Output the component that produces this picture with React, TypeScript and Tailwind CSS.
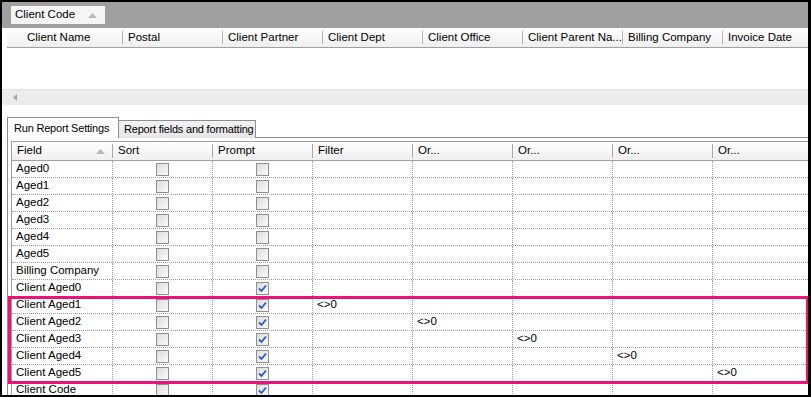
import React from "react";

const topCols = [
  { label: "Client Name", w: 116, pad: 20 },
  { label: "Postal", w: 100 },
  { label: "Client Partner", w: 100 },
  { label: "Client Dept", w: 100 },
  { label: "Client Office", w: 100 },
  { label: "Client Parent Na...", w: 100 },
  { label: "Billing Company", w: 100 },
  { label: "Invoice Date", w: 100 },
];

const gridCols = ["Field", "Sort", "Prompt", "Filter", "Or...", "Or...", "Or...", "Or..."];

interface Row {
  field: string;
  prompt: boolean;
  filterCol?: number; // which column holds "<>0"
}

const rows: Row[] = [
  { field: "Aged0", prompt: false },
  { field: "Aged1", prompt: false },
  { field: "Aged2", prompt: false },
  { field: "Aged3", prompt: false },
  { field: "Aged4", prompt: false },
  { field: "Aged5", prompt: false },
  { field: "Billing Company", prompt: false },
  { field: "Client Aged0", prompt: true },
  { field: "Client Aged1", prompt: true, filterCol: 3 },
  { field: "Client Aged2", prompt: true, filterCol: 4 },
  { field: "Client Aged3", prompt: true, filterCol: 5 },
  { field: "Client Aged4", prompt: true, filterCol: 6 },
  { field: "Client Aged5", prompt: true, filterCol: 7 },
  { field: "Client Code", prompt: true },
];

function SortArrow() {
  return (
    <svg width="9" height="5" viewBox="0 0 9 5" className="shrink-0">
      <path d="M0 5 L4.5 0 L9 5 Z" fill="#b8b8b8" />
    </svg>
  );
}

function Checkbox({ checked }: { checked: boolean }) {
  return (
    <div className="w-[13px] h-[13px] border border-[#8e8f8f] bg-gradient-to-br from-[#dcdcdc] to-[#fbfbfb] flex items-center justify-center">
      {checked && (
        <svg width="9" height="9" viewBox="0 0 9 9">
          <path d="M1 4.5 L3.5 7 L8 1.5" stroke="#2c59c8" strokeWidth="1.8" fill="none" />
        </svg>
      )}
    </div>
  );
}

export default function App() {
  return (
    <div
      className="relative w-[811px] h-[397px] overflow-hidden bg-white border-t-2 border-l-2 border-r-[3px] border-b-2 border-black text-[11.5px] leading-none text-black"
      style={{ fontFamily: '"Liberation Sans", Arial, sans-serif' }}
    >
      {/* Group-by panel */}
      <div className="h-[26px] bg-[#a0a0a0] pl-[9px] pt-[4px]">
        <div className="w-[94px] h-[18px] bg-[#f5f5f5] flex items-center pl-[4px] pr-[8px] justify-between">
          <span className="whitespace-nowrap">Client Code</span>
          <SortArrow />
        </div>
      </div>

      {/* Top grid header */}
      <div className="flex pl-[5px] bg-white">
        <div className="flex flex-1 h-[20px] bg-gradient-to-b from-[#ffffff] to-[#efefef] border-b border-[#a0a0a0]">
          {topCols.map((c, i) => (
            <div
              key={i}
              className="flex items-center shrink-0 border-r border-[#b5b5b5] my-[3px] overflow-hidden"
              style={{ width: c.w, paddingLeft: c.pad ?? 5 }}
            >
              <span className="whitespace-nowrap">{c.label}</span>
            </div>
          ))}
        </div>
      </div>

      {/* Empty body */}
      <div className="h-[41px]" />

      {/* Horizontal scrollbar */}
      <div className="h-[16px] bg-[#ececec] border-t border-[#e2e2e2] flex items-center pl-[11px]">
        <svg width="4" height="7" viewBox="0 0 4 7">
          <path d="M4 0 L0 3.5 L4 7 Z" fill="#a6a6a6" />
        </svg>
      </div>

      <div className="h-[12px]" />

      {/* Tabs */}
      <div className="flex items-end pl-[5px] h-[21px] relative z-10 text-[11px] tracking-[-0.2px]">
        <div className="h-[21px] w-[112px] bg-white border border-b-0 border-[#8c8e94] flex items-center pl-[6px] whitespace-nowrap">
          Run Report Settings
        </div>
        <div className="h-[18px] w-[137px] bg-gradient-to-b from-[#f2f2f2] to-[#e6e6e6] border border-l-0 border-b-0 border-[#8c8e94] flex items-center pl-[5px] whitespace-nowrap overflow-hidden">
          Report fields and formatting
        </div>
      </div>

      {/* Tab panel */}
      <div className="ml-[5px] -mt-px border border-[#8c8e94] border-r-0 pl-[3px] pt-[3px] h-[300px]">
        <div className="border-l border-t border-[#a0a0a0]">
          {/* Grid header */}
          <div className="flex h-[19px] bg-gradient-to-b from-[#ffffff] to-[#efefef] border-b border-[#a0a0a0]">
            {gridCols.map((c, i) => (
              <div
                key={i}
                className={`flex items-center shrink-0 w-[100px] pl-[5px] ${i > 0 ? "border-l border-[#a8a8a8]" : ""} my-[2px]`}
              >
                <span className="whitespace-nowrap">{c}</span>
                {i === 0 && (
                  <span className="ml-auto mr-[7px]">
                    <SortArrow />
                  </span>
                )}
              </div>
            ))}
          </div>

          {/* Rows */}
          {rows.map((r, ri) => (
            <div key={ri} className="flex h-[17px] border-b border-dotted border-[#a0a0a0]">
              {gridCols.map((_, ci) => (
                <div
                  key={ci}
                  className={`shrink-0 w-[100px] flex items-center ${ci > 0 ? "border-l border-dotted border-[#a0a0a0]" : ""} ${
                    ci === 1 || ci === 2 ? "justify-center" : "pl-[4px]"
                  }`}
                >
                  {ci === 0 && <span className="whitespace-nowrap">{r.field}</span>}
                  {ci === 1 && <Checkbox checked={false} />}
                  {ci === 2 && <Checkbox checked={r.prompt} />}
                  {ci > 2 && r.filterCol === ci && <span>&lt;&gt;0</span>}
                </div>
              ))}
            </div>
          ))}
        </div>
      </div>

      {/* Highlight box */}
      <div className="absolute left-[6px] top-[294px] w-[801px] h-[88px] border-[3px] border-[#ee1178] pointer-events-none" />
    </div>
  );
}
